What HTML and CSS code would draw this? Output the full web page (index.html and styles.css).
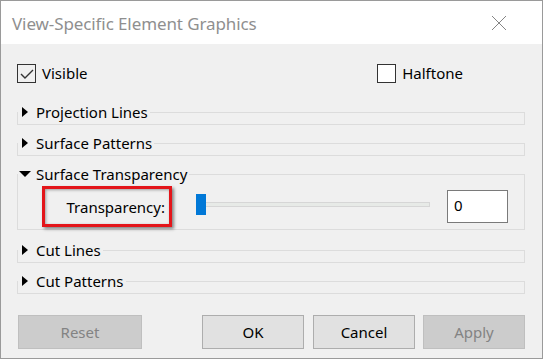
FILE: index.html
```html
<!DOCTYPE html>
<html>
<head>
<meta charset="utf-8">
<link rel="stylesheet" href="styles.css">
</head>
<body>
<div class="window">
  <div class="titlebar">
    <span class="title">View-Specific Element Graphics</span>
    <svg class="close" width="16" height="16" viewBox="0 0 16 16"><path d="M1 1 L15 15 M15 1 L1 15" stroke="#858585" stroke-width="1" fill="none"/></svg>
  </div>
  <div class="content">
    <div class="checkrow">
      <label class="check"><span class="box checked"><svg width="16" height="14" viewBox="0 0 16 14"><path d="M2 7 L6 11 L14 3" stroke="#333" stroke-width="1.4" fill="none"/></svg></span>Visible</label>
      <label class="check"><span class="box"></span>Halftone</label>
    </div>
    <fieldset class="group collapsed">
      <legend><span class="tri-right"></span>Projection Lines</legend>
    </fieldset>
    <fieldset class="group collapsed">
      <legend><span class="tri-right"></span>Surface Patterns</legend>
    </fieldset>
    <fieldset class="group expanded">
      <legend><span class="tri-down"></span>Surface Transparency</legend>
      <div class="trow">
        <div class="redlabel">Transparency:</div>
        <div class="slider"><div class="track"></div><div class="thumb"></div></div>
        <div class="input">0</div>
      </div>
    </fieldset>
    <fieldset class="group collapsed cut">
      <legend><span class="tri-right"></span>Cut Lines</legend>
    </fieldset>
    <fieldset class="group collapsed">
      <legend><span class="tri-right"></span>Cut Patterns</legend>
    </fieldset>
    <div class="buttons">
      <div class="btn disabled reset">Reset</div>
      <div class="btn ok">OK</div>
      <div class="btn cancel">Cancel</div>
      <div class="btn disabled apply">Apply</div>
    </div>
  </div>
</div>
</body>
</html>
```
FILE: styles.css
```css
html, body { margin: 0; padding: 0; background: #fff; }
body { font-family: "Noto Sans", "Open Sans", sans-serif; color: #000; }
.window {
  width: 541px; height: 357px;
  border: 1px solid #9a9a9a;
  background: #f0f0f0;
  display: flex; flex-direction: column;
}
.titlebar {
  height: 43px; background: #fff;
  display: flex; align-items: center;
  padding-left: 11px; padding-right: 35px;
}
.title { flex: 1; font-size: 17px; letter-spacing: -0.1px; color: #8f8f8f; padding-top: 1px; }
.close { display: block; margin-top: 0; }
.content { flex: 1; padding: 0 17px 0 16px; display: flex; flex-direction: column; font-size: 15px; }
.checkrow { display: flex; justify-content: space-between; height: 58px; align-items: flex-start; padding-top: 20px; box-sizing: border-box; padding-right: 62px; }
.check { display: flex; align-items: center; gap: 6px; font-size: 15px; line-height: 19px; }
.box { width: 17px; height: 17px; border: 1px solid #333; background: #fff; display: flex; align-items: center; justify-content: center; }
.box.checked { background: transparent; }
.group {
  margin: 0 0 8px 0; padding: 0 0 2px 0;
  border: 1px solid #dcdcdc; min-width: 0;
  width: 506px;
}
.group.expanded { padding-bottom: 0; }
.group legend {
  padding: 0 2px 0 4px; margin: 0;
  height: 20px; line-height: 20px; font-size: 15px;
  display: flex; align-items: center;
}
.tri-right {
  width: 0; height: 0; margin-right: 8px;
  border-top: 5px solid transparent; border-bottom: 5px solid transparent;
  border-left: 6px solid #000;
}
.tri-down {
  width: 0; height: 0; margin-left: -3px; margin-right: 5px;
  border-left: 6px solid transparent; border-right: 6px solid transparent;
  border-top: 6px solid #000;
}
.group.cut { margin-top: 2px; }
.trow { height: 45px; display: flex; align-items: center; padding-left: 24px; }
.redlabel {
  width: 120px; height: 35px; box-sizing: content-box;
  border: 3px solid #e3151a;
  box-shadow: 2px 2px 3px rgba(0,0,0,0.45), inset 1px 1px 3px rgba(0,0,0,0.35);
  display: flex; align-items: center; justify-content: flex-end;
  padding-right: 4px; font-size: 15px;
}
.slider { position: relative; width: 234px; height: 21px; margin-left: 24px; margin-top: -4px; flex-shrink: 0; }
.track { position: absolute; left: 0; right: 0; top: 8px; height: 3px; background: #e7eae7; border: 1px solid #d6d6d6; }
.thumb { position: absolute; left: 0; top: 0; width: 10px; height: 21px; background: #0078d7; }
.input {
  margin-left: 17px; width: 53px; height: 31px; background: #fff; flex-shrink: 0;
  border: 1px solid #7a7a7a; padding-left: 6px; line-height: 29px; font-size: 15px;
}
.buttons { display: flex; margin-top: 13px; }
.btn {
  width: 100px; height: 32px; border: 1px solid #adadad; background: #e1e1e1; flex-shrink: 0;
  display: flex; align-items: center; justify-content: center; font-size: 15px;
}
.btn.reset { width: 122px; margin-left: 1px; }
.btn.ok { margin-left: 60px; }
.btn.cancel { margin-left: 9px; }
.btn.apply { margin-left: 8px; }
.btn.disabled { background: #cccccc; border-color: #bfbfbf; color: #838383; }
```
